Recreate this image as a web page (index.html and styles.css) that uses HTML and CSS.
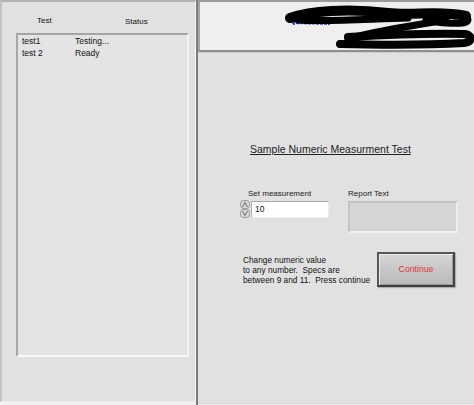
FILE: index.html
```html
<!DOCTYPE html>
<html>
<head>
<meta charset="utf-8">
<link rel="stylesheet" href="styles.css">
</head>
<body>
<div class="app">
  <div class="left">
    <div class="cols">
      <span class="col-test">Test</span>
      <span class="col-status">Status</span>
    </div>
    <div class="listbox">
      <div class="row"><span class="c1">test1</span><span>Testing...</span></div>
      <div class="row"><span class="c1">test 2</span><span>Ready</span></div>
    </div>
  </div>
  <div class="divider"></div>
  <div class="right">
    <div class="header">
      <svg class="scribble" width="276" height="50" viewBox="0 0 276 50">
        <g stroke="#3a4fc4" stroke-width="2" stroke-dasharray="3 1" fill="none">
          <path d="M94 23 L132 24"/>
          <path d="M96 14 L96 25"/>
          <path d="M160 12 L168 12"/>
          <path d="M190 46 L215 46"/>
          <path d="M232 45 L262 44"/>
          <path d="M252 24 L266 22"/>
        </g>
        <g stroke="#000" stroke-linecap="round" stroke-linejoin="round" fill="none">
          <path d="M92 18 C112 11 150 8 190 13 C215 16 240 10 268 16" stroke-width="10"/>
          <path d="M268 16 C273 21 268 24 258 23 C245 24 235 21 228 20" stroke-width="7"/>
          <path d="M100 20 C130 22 170 19 210 18" stroke-width="7"/>
          <path d="M248 20 C215 26 180 30 150 39" stroke-width="7"/>
          <path d="M150 37 C185 35 235 33 268 34 C275 36 274 42 266 43 C230 45 185 45 142 44" stroke-width="8"/>
        </g>
      </svg>
    </div>
    <div class="panel">
      <div class="title">Sample Numeric Measurment Test</div>
      <div class="controls">
        <div class="numeric">
          <div class="label num-label">Set measurement</div>
          <div class="num-row">
            <svg class="spinner" width="10" height="18" viewBox="0 0 10 18">
              <rect x="0.5" y="0.5" width="9" height="8" rx="3" fill="#d8d8d8" stroke="#9a9a9a"/>
              <rect x="0.5" y="9.5" width="9" height="8" rx="3" fill="#d8d8d8" stroke="#9a9a9a"/>
              <path d="M2.5 7 L5 2.5 L7.5 7" fill="none" stroke="#6a6a6a" stroke-width="1"/>
              <path d="M2.5 11 L5 15.5 L7.5 11" fill="none" stroke="#6a6a6a" stroke-width="1"/>
            </svg>
            <div class="num-input">10</div>
          </div>
        </div>
        <div class="report">
          <div class="label">Report Text</div>
          <div class="report-box"></div>
        </div>
      </div>
      <div class="actions">
        <div class="help">Change numeric value<br>to any number.&nbsp; Specs are<br>between 9 and 11.&nbsp; Press continue</div>
        <div class="button">Continue</div>
      </div>
    </div>
  </div>
</div>
</body>
</html>
```

FILE: styles.css
```css
html, body {
  margin: 0;
  padding: 0;
}
body {
  width: 474px;
  height: 405px;
  background: #f2f2f2;
  font-family: "Liberation Sans", Arial, sans-serif;
  color: #111;
  overflow: hidden;
}
.app {
  display: flex;
  height: 405px;
}
.left {
  width: 193px;
  height: 399px;
  background: #e1e1e1;
  border-top: 2px solid #b4b4b4;
  border-left: 2px solid #c4c4c4;
  border-right: 1px solid #f6f6f6;
  border-bottom: 1px solid #eaeaea;
  display: flex;
  flex-direction: column;
}
.cols {
  position: relative;
  height: 31px;
  font-size: 8px;
  line-height: 10px;
}
.col-test {
  position: absolute;
  left: 35px;
  top: 14px;
}
.col-status {
  position: absolute;
  left: 123px;
  top: 15px;
}
.listbox {
  margin-left: 14px;
  width: 165px;
  height: 320px;
  border-top: 2px solid #a4a4a4;
  border-left: 2px solid #a8a8a8;
  border-right: 2px solid #f4f4f4;
  border-bottom: 2px solid #fafafa;
  background: #e4e4e4;
  padding: 0 0 0 4px;
  font-size: 8.5px;
  line-height: 12px;
}
.row {
  display: flex;
}
.c1 {
  width: 53px;
}
.divider {
  width: 2px;
  height: 405px;
  background: #7c7c7c;
}
.right {
  width: 276px;
  display: flex;
  flex-direction: column;
}
.header {
  position: relative;
  height: 48px;
  background: #efefef;
  border-top: 2px solid #9a9a9a;
  border-left: 2px solid #a6a6a6;
  border-bottom: 2px solid #8e8e8e;
}
.scribble {
  position: absolute;
  left: -2px;
  top: -2px;
}
.panel {
  height: 350px;
  background: #e1e1e1;
  border-top: 1px solid #cfcfcf;
  border-bottom: 1px solid #d8d8d8;
  padding-left: 42px;
}
.title {
  margin-top: 90px;
  padding-left: 10px;
  font-size: 10.5px;
  line-height: 13px;
  text-decoration: underline;
  color: #222;
}
.controls {
  display: flex;
  margin-top: 33px;
}
.label {
  font-size: 8px;
  line-height: 10px;
  color: #1a1a1a;
}
.num-label {
  padding-left: 8px;
}
.num-row {
  display: flex;
  align-items: center;
  margin-top: 1px;
}
.spinner {
  display: block;
  margin-right: 1px;
}
.num-input {
  width: 73px;
  height: 15px;
  background: #ffffff;
  border-top: 1px solid #a8a8a8;
  border-left: 1px solid #b0b0b0;
  border-right: 1px solid #ececec;
  border-bottom: 1px solid #f2f2f2;
  padding-left: 3px;
  font-size: 8.5px;
  line-height: 15px;
  color: #111;
}
.report {
  margin-left: 19px;
}
.report-box {
  width: 106px;
  height: 28px;
  margin-top: 2px;
  background: #d5d5d5;
  border-top: 2px solid #c2c2c2;
  border-left: 2px solid #c4c4c4;
  border-right: 2px solid #efefef;
  border-bottom: 2px solid #f2f2f2;
}
.actions {
  display: flex;
  align-items: flex-start;
  margin-top: 19px;
}
.help {
  width: 137px;
  padding-top: 3px;
  padding-left: 3px;
  box-sizing: border-box;
  font-size: 8.3px;
  line-height: 10px;
  color: #111;
  white-space: nowrap;
}
.button {
  width: 74px;
  height: 31px;
  border: 2px solid #565656;
  border-right-color: #444;
  border-bottom-color: #3e3e3e;
  background: linear-gradient(#d6d6d6, #c4c4c4 60%, #b9b9b9);
  box-shadow: inset 1px 1px 0 #ececec, inset -1px -1px 0 #9a9a9a, 1px 1px 1px #b0b0b0;
  color: #e3303c;
  font-size: 8.7px;
  line-height: 31px;
  text-align: center;
}
```
